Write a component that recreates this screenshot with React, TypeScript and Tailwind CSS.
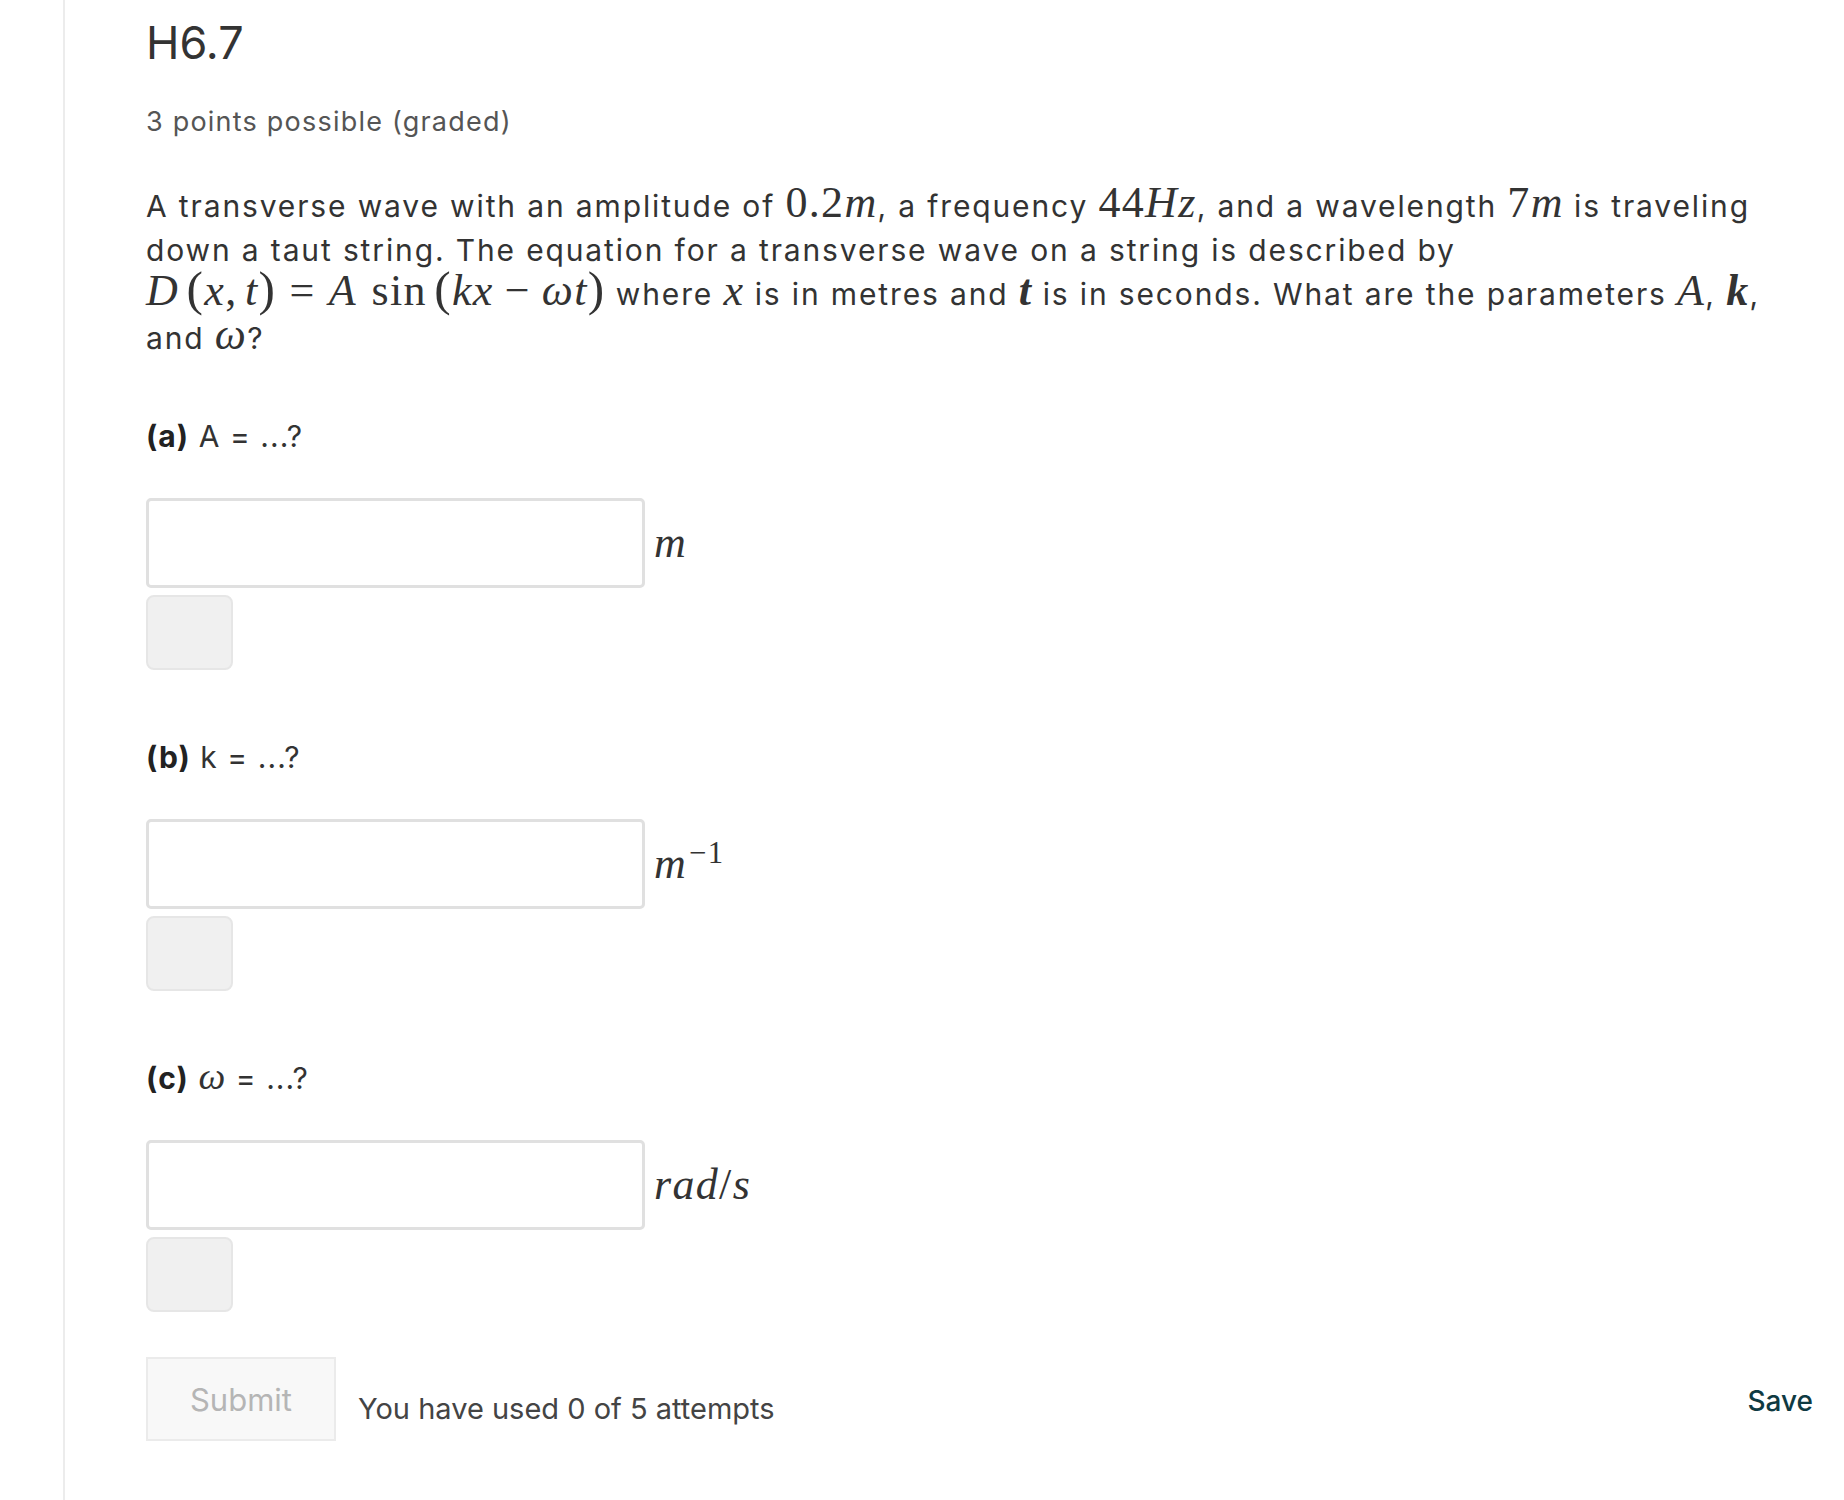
import type { ReactNode } from "react";

// KaTeX-like inline math, rendered with a serif face
function M({ children }: { children: ReactNode }) {
  return (
    <span className="whitespace-nowrap font-['Liberation_Serif',serif] text-[44px] leading-[30px] tracking-[0.03em]">
      {children}
    </span>
  );
}

function V({ children }: { children: ReactNode }) {
  return <i>{children}</i>;
}

function Paren({ children }: { children: ReactNode }) {
  return <span className="text-[1.12em] leading-[30px]">{children}</span>;
}

function Part({
  label,
  question,
  unit,
  first,
}: {
  label: string;
  question: ReactNode;
  unit: ReactNode;
  first?: boolean;
}) {
  return (
    <section className={first ? "mt-[54px]" : "mt-[65px]"}>
      <p className="text-[30px] leading-[44px] tracking-[0.035em] text-[#333]">
        <b className="font-bold text-[#222]">({label})</b> {question}
      </p>
      <div className="mt-[40px] flex items-center gap-[9px]">
        <input
          type="text"
          aria-label={`answer ${label}`}
          className="h-[90px] w-[499px] rounded-[5px] border-[3px] border-[#e0e0e0] bg-white px-3 text-[29px] outline-none"
        />
        <M>{unit}</M>
      </div>
      <div className="mt-[7px] h-[75px] w-[87px] rounded-[8px] border-2 border-[#e6e6e6] bg-[#f0f0f0]" />
    </section>
  );
}

export default function App() {
  return (
    <div className="flex min-h-[1500px] bg-white font-['Inter','Liberation_Sans',sans-serif] text-[#333]">
      <div className="w-[65px] shrink-0 border-r-2 border-[#ececec]" />
      <main className="flex-1 pl-[81px] pr-[31px] pt-[20px]">
        <h2 className="text-[45px] font-normal leading-none text-[#333]">H6.7</h2>
        <p className="mt-[43px] text-[27px] leading-none tracking-[0.045em] text-[#555]">
          3 points possible (graded)
        </p>

        <p className="mt-[49px] text-[30px] leading-[44px] tracking-[0.062em] text-[#333]">
          A transverse wave with an amplitude of{" "}
          <M>
            0.2<V>m</V>
          </M>
          , a frequency{" "}
          <M>
            44<V>Hz</V>
          </M>
          , and a wavelength{" "}
          <M>
            7<V>m</V>
          </M>{" "}
          is traveling down a taut string. The equation for a transverse wave on a string is
          described by{" "}
          <M>
            <V>D</V>
            <span className="ml-[0.17em]">
              <Paren>(</Paren>
            </span>
            <V>x</V>,<span className="ml-[0.17em]">
              <V>t</V>
            </span>
            <Paren>)</Paren>
            <span className="mx-[0.3em]">=</span>
            <V>A</V>
            <span className="ml-[0.33em] mr-[0.17em]">sin</span>
            <Paren>(</Paren>
            <V>kx</V>
            <span className="mx-[0.25em]">−</span>
            <V>ωt</V>
            <Paren>)</Paren>
          </M>{" "}
          where{" "}
          <M>
            <V>x</V>
          </M>{" "}
          is in metres and{" "}
          <M>
            <b>
              <V>t</V>
            </b>
          </M>{" "}
          is in seconds. What are the parameters{" "}
          <M>
            <V>A</V>
          </M>
          ,{" "}
          <M>
            <b>
              <V>k</V>
            </b>
          </M>
          , and{" "}
          <M>
            <V>ω</V>
          </M>
          ?
        </p>

        <Part first label="a" question="A = ...?" unit={<V>m</V>} />
        <Part
          label="b"
          question="k = ...?"
          unit={
            <>
              <V>m</V>
              <sup className="ml-[2px] text-[0.7em]">−1</sup>
            </>
          }
        />
        <Part
          label="c"
          question={
            <>
              <span className="font-['Liberation_Serif',serif] text-[38px] italic leading-none">ω</span> = ...?
            </>
          }
          unit={
            <>
              <V>rad</V>/<V>s</V>
            </>
          }
        />

        <div className="mt-[45px] flex items-start justify-between">
          <div className="flex items-start gap-[22px]">
            <button
              type="button"
              disabled
              className="flex h-[84px] w-[190px] items-center justify-center border-2 border-[#ebebeb] bg-[#f8f8f8] text-[31px] leading-none text-[#b5b5b5]"
            >
              Submit
            </button>
            <p className="pt-[30px] text-[29px] leading-[44px] text-[#444]">
              You have used 0 of 5 attempts
            </p>
          </div>
          <button
            type="button"
            className="mt-[30px] text-[28px] font-medium leading-none text-[#0f3a42]"
          >
            Save
          </button>
        </div>
      </main>
    </div>
  );
}
